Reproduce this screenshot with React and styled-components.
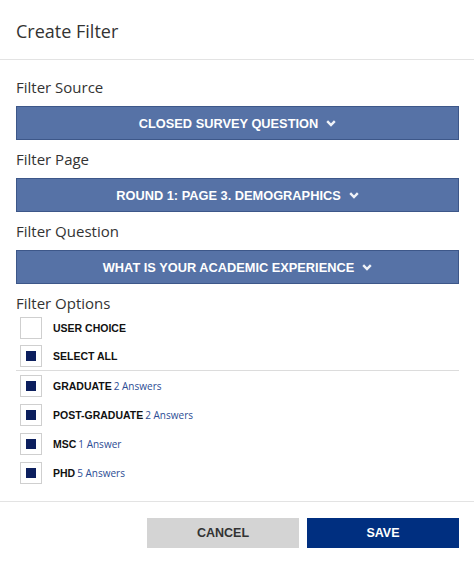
import React from "react";
import styled, { createGlobalStyle } from "styled-components";

const GlobalStyle = createGlobalStyle`
	* {
		box-sizing: border-box;
	}
	body {
		margin: 0;
		background: #fff;
		font-family: "Open Sans", "Noto Sans", sans-serif;
		color: #333;
	}
`;

const Modal = styled.div`
	width: 474px;
	height: 563px;
	display: flex;
	flex-direction: column;
	background: #fff;
`;

const Header = styled.div`
	height: 60px;
	padding: 0 16px;
	display: flex;
	align-items: center;
	border-bottom: 1px solid #e3e3e3;
`;

const Title = styled.h2`
	margin: 0;
	padding-top: 2px;
	font-size: 18px;
	font-weight: 400;
	color: #333;
`;

const Body = styled.div`
	padding: 16px 15px 14px 16px;
	border-bottom: 1px solid #e3e3e3;
`;

const Label = styled.div`
	height: 22px;
	line-height: 22px;
	font-size: 15px;
	color: #333;
	margin-bottom: ${(p) => (p.tight ? 0 : 8)}px;
`;

const Dropdown = styled.button`
	width: 100%;
	height: 34px;
	margin: 0 0 8px;
	display: flex;
	align-items: center;
	justify-content: center;
	gap: 8px;
	background: #5672a6;
	border: 1px solid #3d5789;
	color: #fff;
	font-family: "Liberation Sans", Arial, sans-serif;
	font-weight: 700;
	font-size: 12.8px;
	text-transform: uppercase;
	cursor: pointer;
`;

const Chevron = () => (
	<svg width="10" height="7" viewBox="0 0 10 7">
		<polyline
			points="1.2,1.2 5,5 8.8,1.2"
			fill="none"
			stroke="#f0f3f8"
			strokeWidth="2.4"
		/>
	</svg>
);

const Options = styled.div`
	display: flex;
	flex-direction: column;
`;

const Row = styled.label`
	height: ${(p) => p.h || 29}px;
	display: flex;
	align-items: center;
	padding-left: 4px;
	gap: 11px;
	font-family: "Liberation Sans", Arial, sans-serif;
	font-size: 10.5px;
	font-weight: 700;
	color: #111;
`;

const Box = styled.span`
	width: 22px;
	height: 22px;
	border: 1px solid #cfcfcf;
	background: #fff;
	display: flex;
	align-items: center;
	justify-content: center;
	flex-shrink: 0;
	&::after {
		content: "";
		width: 10px;
		height: 10px;
		background: ${(p) => (p.checked ? "#0c1f5e" : "transparent")};
	}
`;

const Count = styled.span`
	font-family: "Open Sans", "Noto Sans", sans-serif;
	font-weight: 400;
	font-size: 10px;
	color: #2c4c94;
	margin-left: 2px;
`;

const Divider = styled.div`
	height: 1px;
	background: #dcdcdc;
`;

const Footer = styled.div`
	flex: 1;
	display: flex;
	justify-content: flex-end;
	align-items: flex-start;
	gap: 8px;
	padding: 16px 15px 0 0;
`;

const Button = styled.button`
	width: 152px;
	height: 30px;
	border: none;
	background: ${(p) => (p.primary ? "#002f80" : "#d4d4d4")};
	color: ${(p) => (p.primary ? "#fff" : "#333")};
	font-family: "Liberation Sans", Arial, sans-serif;
	font-weight: 700;
	font-size: 12.5px;
	cursor: pointer;
`;

const answers = [
	{ name: "GRADUATE", count: "2 Answers" },
	{ name: "POST-GRADUATE", count: "2 Answers" },
	{ name: "MSC", count: "1 Answer" },
	{ name: "PHD", count: "5 Answers" },
];

const App = () => {
	return (
		<>
			<GlobalStyle />
			<Modal>
				<Header>
					<Title>Create Filter</Title>
				</Header>
				<Body>
					<Label>Filter Source</Label>
					<Dropdown>
						Closed Survey Question <Chevron />
					</Dropdown>
					<Label>Filter Page</Label>
					<Dropdown>
						Round 1: Page 3. Demographics <Chevron />
					</Dropdown>
					<Label>Filter Question</Label>
					<Dropdown>
						What is your academic experience <Chevron />
					</Dropdown>
					<Label tight>Filter Options</Label>
					<Options>
						<Row h={28}>
							<Box />
							USER CHOICE
						</Row>
						<Row h={28}>
							<Box checked />
							SELECT ALL
						</Row>
						<Divider />
						{answers.map((a) => (
							<Row key={a.name}>
								<Box checked />
								<span>
									{a.name}
									<Count>{a.count}</Count>
								</span>
							</Row>
						))}
					</Options>
				</Body>
				<Footer>
					<Button>CANCEL</Button>
					<Button primary>SAVE</Button>
				</Footer>
			</Modal>
		</>
	);
};

export default App;
